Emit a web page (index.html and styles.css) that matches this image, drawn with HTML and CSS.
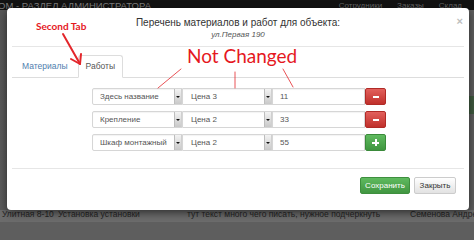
FILE: index.html
```html
<!DOCTYPE html>
<html lang="ru">
<head>
<meta charset="utf-8">
<title>Перечень материалов и работ</title>
<link rel="stylesheet" href="styles.css">
</head>
<body>
<div class="page">
  <header class="navbar">
    <span class="brand">ОМ - РАЗДЕЛ АДМИНИСТРАТОРА</span>
    <nav class="nav"><span>Сотрудники</span><span>Заказы</span><span>Склад</span></nav>
  </header>
  <main class="behind">
    <div class="left-strip"></div>
    <div class="green-strip"></div>
  </main>
  <div class="table-row">
    <span>Улитная 8-10</span>
    <span>Установка установки</span>
    <span>тут текст много чего писать, нужное подчеркнуть</span>
    <span>Семенова Андрей</span>
  </div>
</div>

<div class="modal">
  <div class="modal-header">
    <div class="titles">
      <div class="title">Перечень материалов и работ для объекта:</div>
      <div class="subtitle">ул.Первая 190</div>
    </div>
    <span class="close">×</span>
  </div>
  <div class="modal-body">
    <ul class="tabs">
      <li class="tab">Материалы</li>
      <li class="tab active">Работы</li>
    </ul>
    <div class="rows">
      <div class="row">
        <div class="select s1"><span>Здесь название</span><i class="caret"></i></div>
        <div class="select s2"><span>Цена 3</span><i class="caret"></i></div>
        <div class="field">11</div>
        <button class="btn-icon danger"><i class="minus"></i></button>
      </div>
      <div class="row">
        <div class="select s1"><span>Крепление</span><i class="caret"></i></div>
        <div class="select s2"><span>Цена 2</span><i class="caret"></i></div>
        <div class="field">33</div>
        <button class="btn-icon danger"><i class="minus"></i></button>
      </div>
      <div class="row">
        <div class="select s1"><span>Шкаф монтажный</span><i class="caret"></i></div>
        <div class="select s2"><span>Цена 2</span><i class="caret"></i></div>
        <div class="field">55</div>
        <button class="btn-icon success"><i class="plus"></i></button>
      </div>
    </div>
  </div>
  <div class="modal-footer">
    <button class="btn btn-success">Сохранить</button>
    <button class="btn btn-default">Закрыть</button>
  </div>
</div>

<div class="notes">
  <span class="note-tab">Second Tab</span>
  <span class="note-big">Not Changed</span>
  <svg class="note-lines" width="474" height="222" viewBox="0 0 474 222">
    <g fill="none" stroke="#e3262b" stroke-linecap="round">
      <path d="M63 34 L80 64" stroke-width="2"/>
      <path d="M71 59 L80 64 L81 54" stroke-width="2" stroke-linejoin="round"/>
      <path d="M181 69 L158 88" stroke-width="0.8"/>
      <path d="M235 72 L235 88" stroke-width="0.8"/>
      <path d="M283 69 L293 87" stroke-width="0.8"/>
    </g>
  </svg>
</div>
</body>
</html>
```

FILE: styles.css
```css
* { box-sizing: border-box; }

html, body {
  margin: 0;
  padding: 0;
}

body {
  width: 474px;
  height: 222px;
  overflow: hidden;
  position: relative;
  background: #5e5e5e;
  font-family: "Liberation Sans", Arial, sans-serif;
}

/* ---------- page behind the backdrop ---------- */
.page {
  display: flex;
  flex-direction: column;
  height: 222px;
}

.navbar {
  height: 10px;
  flex: none;
  background: #121212;
  display: flex;
  justify-content: space-between;
  overflow: hidden;
}

.brand {
  font-size: 9.5px;
  line-height: 11px;
  color: #7b7b7b;
  margin-left: -2px;
  white-space: nowrap;
}

.nav {
  display: flex;
  gap: 15px;
  margin-right: 12px;
  font-size: 8px;
  line-height: 11px;
  color: #666;
}

.behind {
  flex: 1;
  display: flex;
  justify-content: space-between;
}

.left-strip {
  width: 7px;
  background: linear-gradient(#555 0, #5b5b5b 100%);
}

.green-strip {
  width: 5px;
  height: 18px;
  margin-top: 86px;
  background: #3f5a3f;
}

.table-row {
  height: 12px;
  flex: none;
  background: #6c6c6c;
  display: grid;
  grid-template-columns: 56px 129px 223px 1fr;
  padding-left: 2px;
  font-size: 8.5px;
  line-height: 9px;
  color: #252525;
  white-space: nowrap;
  overflow: hidden;
}

/* ---------- modal ---------- */
.modal {
  position: absolute;
  top: 8px;
  left: 7px;
  width: 462px;
  background: #fff;
  border-radius: 4px;
  box-shadow: 0 3px 8px rgba(0, 0, 0, 0.55);
}

.modal-header {
  margin: 0 5px;
  padding: 9px 0 6px;
  border-bottom: 1px solid #e6e6e6;
  display: grid;
  grid-template-columns: 30px 1fr 30px;
}

.titles {
  grid-column: 2;
  text-align: center;
}

.title {
  font-size: 10px;
  line-height: 12px;
  color: #333;
}

.subtitle {
  margin-top: 1px;
  font-size: 8px;
  line-height: 10px;
  font-style: italic;
  color: #555;
}

.close {
  grid-column: 3;
  justify-self: end;
  align-self: start;
  margin-right: 1px;
  font-size: 11px;
  line-height: 8px;
  font-weight: bold;
  color: #bdbdbd;
}

.modal-body {
  padding: 0 5px;
}

.tabs {
  list-style: none;
  margin: 8px 0 0;
  padding: 0 0 0 2px;
  display: flex;
  height: 23px;
  border-bottom: 1px solid #ddd;
}

.tab {
  height: 23px;
  margin-right: 2px;
  padding: 0 7px;
  border: 1px solid transparent;
  border-radius: 3px 3px 0 0;
  font-size: 8.5px;
  line-height: 21px;
  color: #4f7eae;
}

.tab.active {
  border-color: #ddd #ddd #fff;
  background: #fff;
  color: #555;
}

.rows {
  margin-top: 10px;
  padding-left: 80px;
  display: flex;
  flex-direction: column;
  gap: 6px;
}

.row {
  display: flex;
  height: 17px;
}

.select, .field {
  height: 17px;
  border: 1px solid #d6d6d6;
  box-shadow: inset 0 1px 1px rgba(0, 0, 0, 0.05);
  font-size: 8px;
  color: #555;
  display: flex;
  align-items: center;
  white-space: nowrap;
}

.select { padding-left: 7px; }
.s1 { width: 91px; border-radius: 2px 0 0 2px; }
.s2 { width: 90px; border-left: none; padding-left: 8px; }
.field { width: 92px; border-left: none; padding-left: 7px; }

.caret {
  margin-left: auto;
  width: 8px;
  height: 15px;
  background: linear-gradient(#f3f3f3, #c9c9c9);
  border-left: 1px solid #bdbdbd;
  border-right: 1px solid #d0d0d0;
  display: flex;
  align-items: center;
  justify-content: center;
}

.caret::after {
  content: "";
  border-left: 2px solid transparent;
  border-right: 2px solid transparent;
  border-top: 2px solid #111;
}

.btn-icon {
  width: 21px;
  height: 17px;
  padding: 0;
  margin: 0;
  border-radius: 2px;
  display: flex;
  align-items: center;
  justify-content: center;
}

.danger {
  background: linear-gradient(#e2605c, #c0302b);
  border: 1px solid #b02b27;
}

.success {
  background: linear-gradient(#5fba5f, #3f963f);
  border: 1px solid #3a8a3a;
}

.minus {
  width: 6px;
  height: 2px;
  background: #fff;
}

.plus {
  width: 7px;
  height: 7px;
  background:
    linear-gradient(#fff, #fff) center / 7px 2px no-repeat,
    linear-gradient(#fff, #fff) center / 2px 7px no-repeat;
}

.modal-footer {
  margin: 17px 5px 0;
  padding: 8px 8px 16px;
  border-top: 1px solid #e6e6e6;
  display: flex;
  justify-content: flex-end;
  gap: 4px;
}

.btn {
  height: 17px;
  padding: 0;
  border-radius: 2px;
  font-family: "Liberation Sans", Arial, sans-serif;
  font-size: 8px;
  line-height: 15px;
}

.btn-success {
  width: 50px;
  color: #fff;
  background: linear-gradient(#5fba5f, #419641);
  border: 1px solid #3e8f3e;
}

.btn-default {
  width: 42px;
  color: #333;
  background: linear-gradient(#fff, #e2e2e2);
  border: 1px solid #ccc;
}

/* ---------- red annotations on top ---------- */
.notes {
  position: absolute;
  inset: 0;
  pointer-events: none;
}

.note-lines {
  position: absolute;
  left: 0;
  top: 0;
}

.note-tab {
  position: absolute;
  left: 36px;
  top: 21px;
  font-family: Lato, "Open Sans", sans-serif;
  font-weight: bold;
  font-size: 10px;
  line-height: 10px;
  color: #e5181e;
  white-space: nowrap;
}

.note-big {
  position: absolute;
  left: 187px;
  top: 46px;
  font-family: Lato, "Open Sans", sans-serif;
  font-size: 19px;
  line-height: 19px;
  color: #e5181e;
  white-space: nowrap;
}
```
